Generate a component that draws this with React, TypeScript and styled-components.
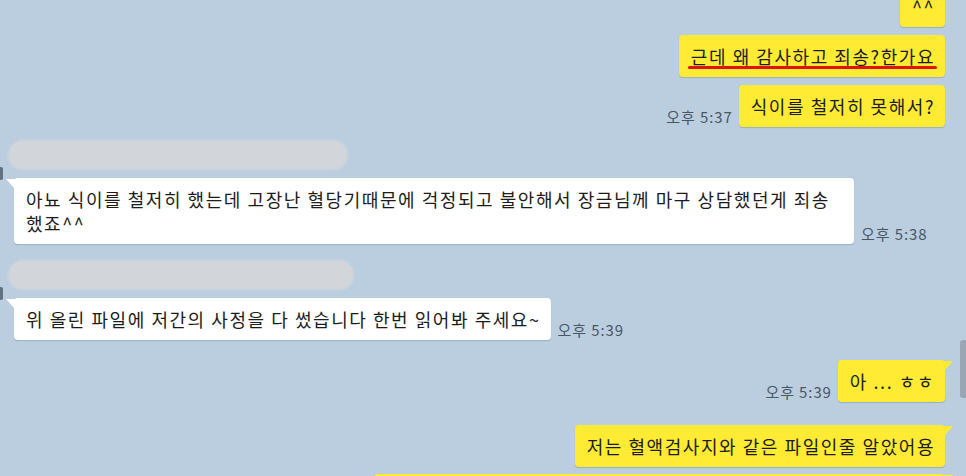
import React from 'react';
import styled, { createGlobalStyle, css } from 'styled-components';

const Global = createGlobalStyle`
  html, body { margin: 0; padding: 0; background: #bacee0; overflow: hidden; }
  body {
    width: 966px; height: 476px;
    font-family: "Noto Sans CJK KR", "Noto Sans", sans-serif;
    -webkit-font-smoothing: antialiased;
  }
`;

const Chat = styled.div`
  position: relative;
  width: 966px;
  height: 476px;
  overflow: hidden;
  box-sizing: border-box;
  padding-right: 21px;
  display: flex;
  flex-direction: column;
`;

const RightRow = styled.div<{ $mt: number }>`
  display: flex;
  justify-content: flex-end;
  align-items: flex-end;
  gap: 6px;
  margin-top: ${(p) => p.$mt}px;
`;

const LeftBlock = styled.div<{ $mt: number }>`
  display: flex;
  align-items: flex-start;
  margin-top: ${(p) => p.$mt}px;
`;

const AvatarEdge = styled.div`
  width: 3px;
  height: 13px;
  margin-top: 27px;
  background: #4f5a66;
  border-radius: 0 2px 2px 0;
  opacity: 0.8;
  flex-shrink: 0;
`;

const LeftColumn = styled.div`
  display: flex;
  flex-direction: column;
  padding-left: 11px;
`;

const NamePill = styled.div<{ $w: number }>`
  width: ${(p) => p.$w}px;
  height: 30px;
  margin-left: -6px;
  margin-bottom: 8px;
  border-radius: 15px;
  background: #d2d6da;
  filter: blur(1.5px);
`;

const LeftRow = styled.div`
  display: flex;
  align-items: flex-end;
  gap: 7px;
`;

const Bubble = styled.div<{ $tone: 'yellow' | 'white'; $tail?: boolean; $marked?: boolean; $maxW?: number }>`
  position: relative;
  box-sizing: border-box;
  padding: 9px 10px 9px 12px;
  min-height: 42px;
  border-radius: 4px;
  font-size: 18px;
  letter-spacing: 1.55px;
  line-height: 24px;
  color: #1c1c1c;
  background: ${(p) => (p.$tone === 'yellow' ? '#ffeb33' : '#ffffff')};
  box-shadow: 0 1px 1px rgba(60, 80, 100, 0.25);
  max-width: ${(p) => p.$maxW ?? 840}px;
  ${(p) =>
    p.$tail &&
    (p.$tone === 'yellow'
      ? css`
          &::before {
            content: '';
            position: absolute;
            top: 1px;
            right: -8px;
            border-left: 9px solid #ffeb33;
            border-bottom: 10px solid transparent;
          }
        `
      : css`
          &::before {
            content: '';
            position: absolute;
            top: 1px;
            left: -8px;
            border-right: 9px solid #ffffff;
            border-bottom: 10px solid transparent;
          }
        `)}
  ${(p) =>
    p.$marked &&
    css`
      &::after {
        content: '';
        position: absolute;
        left: 9px;
        right: 8px;
        bottom: 8px;
        height: 3px;
        border-radius: 2px;
        background: #e3120b;
      }
    `}
`;

const Time = styled.span`
  font-size: 15px;
  letter-spacing: 0.9px;
  line-height: 18px;
  color: #4a5663;
  white-space: nowrap;
  margin-bottom: 1px;
`;

const Scroll = styled.div`
  position: absolute;
  right: 0;
  top: 340px;
  width: 6px;
  height: 58px;
  border-radius: 3px 0 0 3px;
  background: #9aa6b3;
`;

export default function App() {
  return (
    <>
      <Global />
      <Chat>
        <RightRow $mt={-15}>
          <Bubble $tone="yellow">^^</Bubble>
        </RightRow>
        <RightRow $mt={8}>
          <Bubble $tone="yellow" $marked>근데 왜 감사하고 죄송?한가요</Bubble>
        </RightRow>
        <RightRow $mt={8}>
          <Time>오후 5:37</Time>
          <Bubble $tone="yellow">식이를 철저히 못해서?</Bubble>
        </RightRow>

        <LeftBlock $mt={13}>
          <AvatarEdge />
          <LeftColumn>
            <NamePill $w={340} />
            <LeftRow>
              <Bubble $tone="white" $tail $maxW={840}>
                아뇨 식이를 철저히 했는데 고장난 혈당기때문에 걱정되고 불안해서 장금님께 마구 상담했던게 죄송했죠^^
              </Bubble>
              <Time>오후 5:38</Time>
            </LeftRow>
          </LeftColumn>
        </LeftBlock>

        <LeftBlock $mt={16}>
          <AvatarEdge />
          <LeftColumn>
            <NamePill $w={346} />
            <LeftRow>
              <Bubble $tone="white" $tail>
                위 올린 파일에 저간의 사정을 다 썼습니다 한번 읽어봐 주세요~
              </Bubble>
              <Time>오후 5:39</Time>
            </LeftRow>
          </LeftColumn>
        </LeftBlock>

        <RightRow $mt={20}>
          <Time>오후 5:39</Time>
          <Bubble $tone="yellow" $tail>아 ... ㅎㅎ</Bubble>
        </RightRow>
        <RightRow $mt={23}>
          <Bubble $tone="yellow" $tail>저는 혈액검사지와 같은 파일인줄 알았어용</Bubble>
        </RightRow>
        <RightRow $mt={7}>
          <Bubble $tone="yellow" $tail style={{ width: 571 }}>&nbsp;</Bubble>
        </RightRow>
        <Scroll />
      </Chat>
    </>
  );
}
